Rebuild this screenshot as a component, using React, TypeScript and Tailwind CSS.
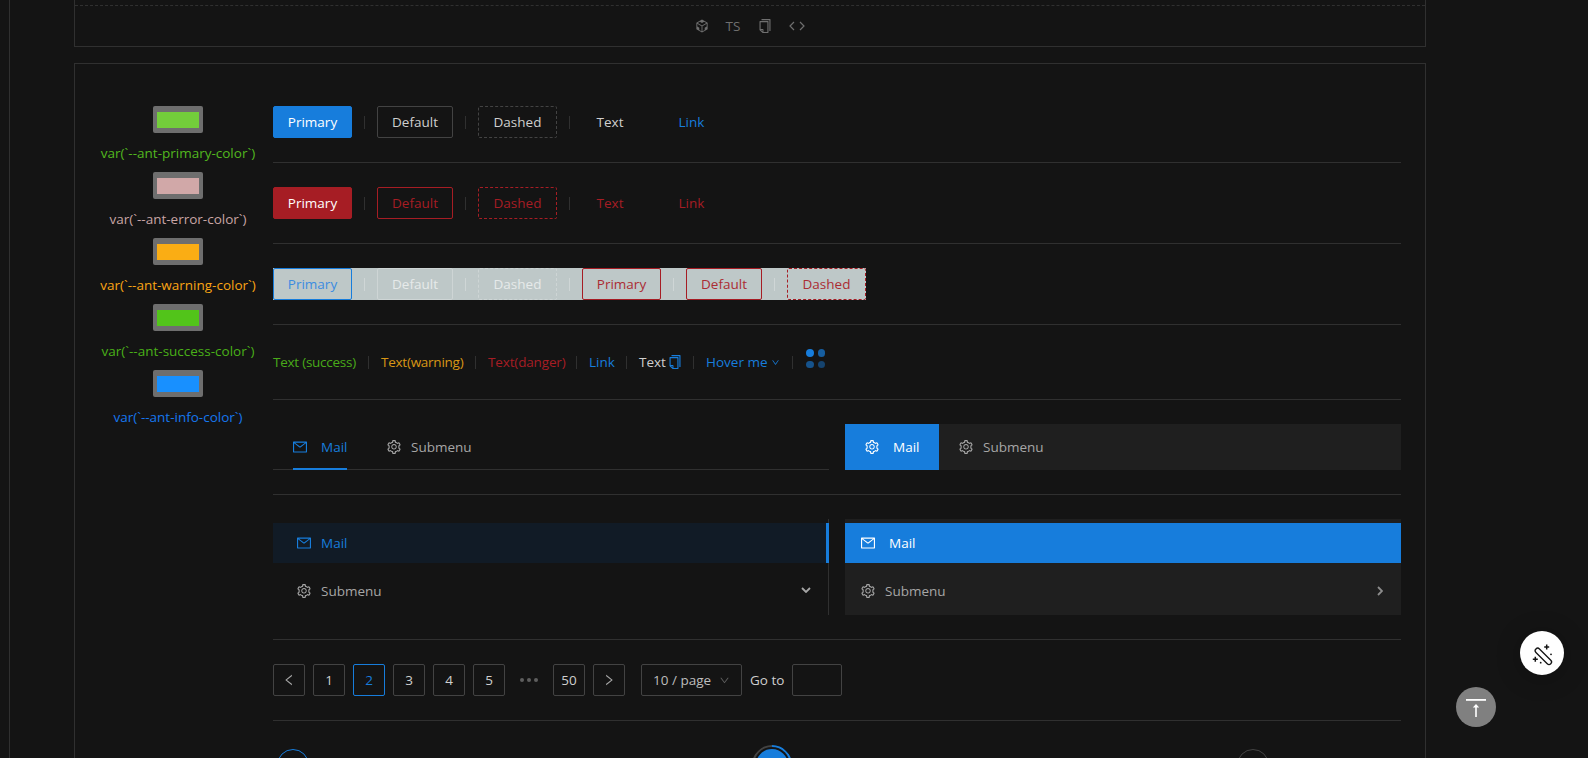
import {
  AiOutlineCodeSandbox,
  AiOutlineCopy,
  AiOutlineDown,
  AiOutlineLeft,
  AiOutlineMail,
  AiOutlineRight,
  AiOutlineSetting,
} from "react-icons/ai"

function VDivider({ className = "bg-[#303030]" }: { className?: string }) {
  return <span className={`h-[13px] w-px shrink-0 ${className}`} />
}

function Rule() {
  return <div className="h-px bg-[#303030]" />
}

function Btn({ w, className, label }: { w: string; className: string; label: string }) {
  return (
    <button className={`flex h-8 shrink-0 items-center justify-center rounded-[2px] border whitespace-nowrap ${w} ${className}`}>
      {label}
    </button>
  )
}

function Swatch({ inner, text, label }: { inner: string; text: string; label: string }) {
  return (
    <div className="flex h-[66px] flex-col items-center gap-[9px]">
      <div className="flex h-[27px] w-[50px] items-center justify-center rounded-[2px] bg-[#6e6e6e]">
        <div className={`h-4 w-[42px] ${inner}`} />
      </div>
      <div className={`leading-[22px] whitespace-nowrap ${text}`}>{label}</div>
    </div>
  )
}

function PageBox({ children, className = "border-[#434343] text-[#cfcfcf]" }: { children?: React.ReactNode; className?: string }) {
  return <div className={`flex h-8 w-8 items-center justify-center rounded-[2px] border ${className}`}>{children}</div>
}

function ButtonRow() {
  return (
    <div className="flex items-center gap-3">
      <Btn w="w-[79px]" className="border-[#177ddc] bg-[#177ddc] text-white" label="Primary" />
      <VDivider />
      <Btn w="w-[76px]" className="border-[#434343] text-[#cfcfcf]" label="Default" />
      <VDivider />
      <Btn w="w-[79px]" className="border-dashed border-[#434343] text-[#cfcfcf]" label="Dashed" />
      <VDivider />
      <Btn w="w-[56px]" className="border-transparent text-[#cfcfcf]" label="Text" />
      <VDivider className="bg-transparent" />
      <Btn w="w-[57px]" className="border-transparent text-[#177ddc]" label="Link" />
    </div>
  )
}

function DangerRow() {
  return (
    <div className="flex items-center gap-3">
      <Btn w="w-[79px]" className="border-[#a61d24] bg-[#a61d24] text-white" label="Primary" />
      <VDivider />
      <Btn w="w-[76px]" className="border-[#a61d24] text-[#a61d24]" label="Default" />
      <VDivider />
      <Btn w="w-[79px]" className="border-dashed border-[#a61d24] text-[#a61d24]" label="Dashed" />
      <VDivider />
      <Btn w="w-[56px]" className="border-transparent text-[#a61d24]" label="Text" />
      <VDivider className="bg-transparent" />
      <Btn w="w-[57px]" className="border-transparent text-[#a61d24]" label="Link" />
    </div>
  )
}

function GhostRow() {
  const faint = "bg-[#cfd6d6]"
  return (
    <div className="flex w-fit items-center gap-3 bg-[#bec8c8]">
      <Btn w="w-[79px]" className="border-[#177ddc] text-[#3c8ce0]" label="Primary" />
      <VDivider className={faint} />
      <Btn w="w-[76px]" className="border-[#ced5d5] text-[#e6eaea]" label="Default" />
      <VDivider className={faint} />
      <Btn w="w-[79px]" className="border-dashed border-[#ced5d5] text-[#e6eaea]" label="Dashed" />
      <VDivider className={faint} />
      <Btn w="w-[79px]" className="border-[#a61d24] text-[#ab2c33]" label="Primary" />
      <VDivider className={faint} />
      <Btn w="w-[76px]" className="border-[#a61d24] text-[#ab2c33]" label="Default" />
      <VDivider className={faint} />
      <Btn w="w-[79px]" className="border-dashed border-[#a61d24] text-[#ab2c33]" label="Dashed" />
    </div>
  )
}

function TextRow() {
  return (
    <div className="flex h-[26px] items-center gap-3 whitespace-nowrap">
      <span className="w-[83px] tracking-[-0.25px] text-[#49aa19]">Text (success)</span>
      <VDivider />
      <span className="w-[82px] tracking-[-0.25px] text-[#d89614]">Text(warning)</span>
      <VDivider />
      <span className="w-[76px] tracking-[-0.15px] text-[#a61d24]">Text(danger)</span>
      <VDivider />
      <span className="w-[25px] text-[#177ddc]">Link</span>
      <VDivider />
      <span className="flex w-[42px] items-center gap-[5px] text-[#cfcfcf]">
        <span className="w-[25px]">Text</span>
        <AiOutlineCopy className="-mx-[2px] h-4 w-4 text-[#177ddc]" />
      </span>
      <VDivider />
      <span className="flex w-[74px] items-center gap-[5px] text-[#177ddc]">
        <span className="w-[60px]">Hover me</span>
        <AiOutlineDown className="h-[11px] w-[11px]" />
      </span>
      <VDivider />
      <div className="ml-px grid grid-cols-2 gap-1 self-start">
        <span className="h-[7.5px] w-[7.5px] rounded-full bg-[#177ddc]" />
        <span className="h-[7.5px] w-[7.5px] rounded-full bg-[#177ddc] opacity-70" />
        <span className="h-[7.5px] w-[7.5px] rounded-full bg-[#177ddc] opacity-60" />
        <span className="h-[7.5px] w-[7.5px] rounded-full bg-[#177ddc] opacity-45" />
      </div>
    </div>
  )
}

function HorizontalMenus() {
  return (
    <div className="grid grid-cols-2 gap-4">
      <div className="flex h-[46px] border-b border-[#303030]">
        <div className="relative ml-5 flex h-[46px] items-center gap-[14px] text-[#177ddc]">
          <AiOutlineMail className="-mx-px h-4 w-4" />
          <span className="w-[26px]">Mail</span>
          <span className="absolute inset-x-0 bottom-0 h-[2px] bg-[#177ddc]" />
        </div>
        <div className="ml-10 flex items-center gap-[10px] text-[#a6a6a6]">
          <AiOutlineSetting className="-mx-px h-4 w-4" />
          <span className="whitespace-nowrap">Submenu</span>
        </div>
      </div>
      <div className="flex h-[46px] bg-[#1f1f1f]">
        <div className="flex items-center gap-[14px] bg-[#177ddc] px-5 text-white">
          <AiOutlineSetting className="-mx-px h-4 w-4" />
          <span className="w-[26px]">Mail</span>
        </div>
        <div className="flex items-center gap-[10px] px-5 text-[#a6a6a6]">
          <AiOutlineSetting className="-mx-px h-4 w-4" />
          <span className="whitespace-nowrap">Submenu</span>
        </div>
      </div>
    </div>
  )
}

function VerticalMenus() {
  return (
    <div className="grid grid-cols-2 gap-4">
      <div className="h-24 border-r border-[#303030] py-1">
        <div className="-mr-px flex h-10 items-center gap-[10px] border-r-[3px] border-[#177ddc] bg-[#111b26] pl-6 text-[#177ddc]">
          <AiOutlineMail className="-mx-px h-4 w-4" />
          <span>Mail</span>
        </div>
        <div className="mt-2 flex h-10 items-center gap-[10px] pr-[17px] pl-6 text-[#a6a6a6]">
          <AiOutlineSetting className="-mx-px h-4 w-4" />
          <span className="grow whitespace-nowrap">Submenu</span>
          <svg width="10" height="6" viewBox="0 0 10 6" fill="none" stroke="#a6a6a6" strokeWidth="1.8" className="-translate-y-px">
            <path d="M1 1l4 4 4-4" />
          </svg>
        </div>
      </div>
      <div className="h-24 bg-[#1f1f1f] py-1">
        <div className="flex h-10 items-center gap-[14px] bg-[#177ddc] pl-4 text-white">
          <AiOutlineMail className="-mx-px h-4 w-4" />
          <span>Mail</span>
        </div>
        <div className="mt-2 flex h-10 items-center gap-[10px] pr-[18px] pl-4 text-[#a6a6a6]">
          <AiOutlineSetting className="-mx-px h-4 w-4" />
          <span className="grow whitespace-nowrap">Submenu</span>
          <svg width="6" height="10" viewBox="0 0 6 10" fill="none" stroke="#8c8c8c" strokeWidth="1.8">
            <path d="M1 1l4 4-4 4" />
          </svg>
        </div>
      </div>
    </div>
  )
}

function Pager() {
  return (
    <div className="flex h-8 items-center">
      <div className="flex gap-2">
        <PageBox className="border-[#434343] text-[#a6a6a6]">
          <AiOutlineLeft className="h-[14px] w-[14px]" />
        </PageBox>
        <PageBox>1</PageBox>
        <PageBox className="border-[#177ddc] text-[#177ddc]">2</PageBox>
        <PageBox>3</PageBox>
        <PageBox>4</PageBox>
        <PageBox>5</PageBox>
        <div className="flex h-8 w-8 items-center justify-center gap-[3px]">
          <span className="h-1 w-1 rounded-full bg-[#5e5e5e]" />
          <span className="h-1 w-1 rounded-full bg-[#5e5e5e]" />
          <span className="h-1 w-1 rounded-full bg-[#5e5e5e]" />
        </div>
        <PageBox>50</PageBox>
        <PageBox className="border-[#434343] text-[#a6a6a6]">
          <AiOutlineRight className="h-[14px] w-[14px]" />
        </PageBox>
      </div>
      <div className="ml-4 flex h-8 w-[101px] items-center justify-between rounded-[2px] border border-[#434343] px-[11px] whitespace-nowrap text-[#bdbdbd]">
        <span>10 / page</span>
        <AiOutlineDown className="h-[11px] w-[11px] text-[#5e5e5e]" />
      </div>
      <span className="ml-2 w-[34px] whitespace-nowrap text-[#cfcfcf]">Go to</span>
      <div className="ml-2 h-8 w-[50px] rounded-[2px] border border-[#434343]" />
    </div>
  )
}

function Steps() {
  return (
    <div className="mt-[28px] flex">
      <div className="ml-1 h-8 w-8 rounded-full border border-[#177ddc]" />
      <div className="relative ml-[447px] h-8 w-8 rounded-full bg-[#177ddc]">
        <span className="absolute -inset-1 rotate-45 rounded-full border-2 border-[#434343] border-t-[#177ddc]" />
      </div>
      <div className="ml-[449px] h-8 w-8 rounded-full border border-[#434343]" />
    </div>
  )
}

export default function App() {
  return (
    <div className="relative h-[758px] overflow-hidden bg-[#141414] font-['Open_Sans',sans-serif] text-[13.5px] leading-[22px]">
      <div className="ml-[9px] h-full border-l border-[#303030] pl-[64px]">
        <div className="w-[1352px]">
          <div className="h-[47px] border-x border-b border-[#303030] pt-[5px]">
            <div className="flex h-[41px] items-center justify-center border-t border-dashed border-[#303030] text-[#6f6f6f]">
              <div className="flex items-center gap-[18px]">
                <AiOutlineCodeSandbox className="-mx-[2px] h-4 w-4" />
                <span className="w-[15px]">TS</span>
                <AiOutlineCopy className="-mx-[2px] h-4 w-4" />
                <svg width="16" height="10" viewBox="0 0 16 10" fill="none" stroke="#6f6f6f" strokeWidth="1.2">
                  <path d="M5 1L1 5l4 4M11 1l4 4-4 4" />
                </svg>
              </div>
            </div>
          </div>

          <div className="mt-4 flex gap-4 border-x border-t border-[#303030] px-6 pt-[42px] pb-6">
            <div className="w-[158px] shrink-0">
              <Swatch inner="bg-[#73cd3b]" text="text-[#52b81f]" label="var(`--ant-primary-color`)" />
              <Swatch inner="bg-[#d1a8a8]" text="text-[#c9a5a5]" label="var(`--ant-error-color`)" />
              <Swatch inner="bg-[#faad14]" text="text-[#faa514]" label="var(`--ant-warning-color`)" />
              <Swatch inner="bg-[#52c41a]" text="text-[#49b018]" label="var(`--ant-success-color`)" />
              <Swatch inner="bg-[#1890ff]" text="text-[#1677ee]" label="var(`--ant-info-color`)" />
            </div>
            <div className="flex min-w-0 grow flex-col gap-6">
              <ButtonRow />
              <Rule />
              <DangerRow />
              <Rule />
              <GhostRow />
              <Rule />
              <TextRow />
              <Rule />
              <HorizontalMenus />
              <Rule />
              <VerticalMenus />
              <Rule />
              <Pager />
              <div>
                <Rule />
                <Steps />
              </div>
            </div>
          </div>
        </div>
      </div>

      <button className="absolute top-[631px] left-[1520px] flex h-11 w-11 items-center justify-center rounded-full bg-white shadow-[0_3px_24px_rgba(0,0,0,0.25)]">
        <svg width="44" height="44" viewBox="0 0 44 44" fill="none" stroke="#141414" strokeWidth="1.3">
          <rect x="20.5" y="15" width="5" height="21" rx="2.5" transform="rotate(-45 23 25)" />
          <path d="M26.7 13.5v5M24.2 16h5M15.3 25.8v5M12.8 28.3h5" strokeWidth="1.5" />
          <circle cx="31" cy="23.3" r="0.9" fill="#141414" stroke="none" />
          <circle cx="20.7" cy="31.7" r="0.9" fill="#141414" stroke="none" />
        </svg>
      </button>
      <button className="absolute top-[687px] left-[1456px] flex h-10 w-10 items-center justify-center rounded-full bg-[#808080]">
        <svg width="40" height="40" viewBox="0 0 40 40" fill="white">
          <rect x="10" y="12" width="20" height="1.8" />
          <path d="M19.2 30h1.6V20.5h2.4L20 17l-3.2 3.5h2.4z" />
        </svg>
      </button>
    </div>
  )
}
